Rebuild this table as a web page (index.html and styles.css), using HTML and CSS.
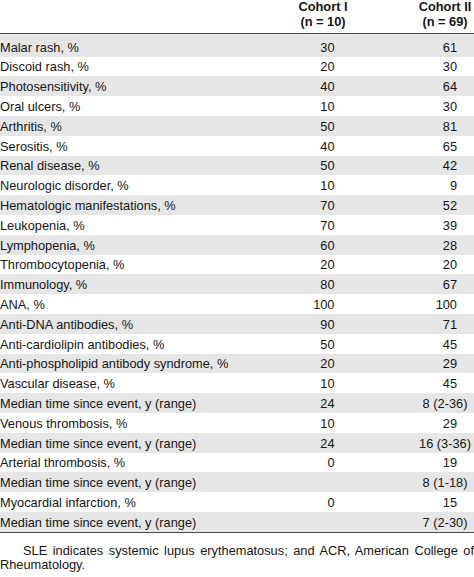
FILE: index.html
```html
<!DOCTYPE html>
<html lang="en">
<head>
<meta charset="utf-8">
<title>Cohort table</title>
<link rel="stylesheet" href="styles.css">
</head>
<body>
<div class="table">
  <div class="head">
    <div class="label"></div>
    <div class="c1 hcell">Cohort I<br>(n = 10)</div>
    <div class="c2 hcell">Cohort II<br>(n = 69)</div>
  </div>
  <div class="row shade first"><div class="label">Malar rash, %</div><div class="c1 num">30</div><div class="c2 num">61</div></div>
  <div class="row"><div class="label">Discoid rash, %</div><div class="c1 num">20</div><div class="c2 num">30</div></div>
  <div class="row shade"><div class="label">Photosensitivity, %</div><div class="c1 num">40</div><div class="c2 num">64</div></div>
  <div class="row"><div class="label">Oral ulcers, %</div><div class="c1 num">10</div><div class="c2 num">30</div></div>
  <div class="row shade"><div class="label">Arthritis, %</div><div class="c1 num">50</div><div class="c2 num">81</div></div>
  <div class="row"><div class="label">Serositis, %</div><div class="c1 num">40</div><div class="c2 num">65</div></div>
  <div class="row shade"><div class="label">Renal disease, %</div><div class="c1 num">50</div><div class="c2 num">42</div></div>
  <div class="row"><div class="label">Neurologic disorder, %</div><div class="c1 num">10</div><div class="c2 num">9</div></div>
  <div class="row shade"><div class="label">Hematologic manifestations, %</div><div class="c1 num">70</div><div class="c2 num">52</div></div>
  <div class="row"><div class="label">Leukopenia, %</div><div class="c1 num">70</div><div class="c2 num">39</div></div>
  <div class="row shade"><div class="label">Lymphopenia, %</div><div class="c1 num">60</div><div class="c2 num">28</div></div>
  <div class="row"><div class="label">Thrombocytopenia, %</div><div class="c1 num">20</div><div class="c2 num">20</div></div>
  <div class="row shade"><div class="label">Immunology, %</div><div class="c1 num">80</div><div class="c2 num">67</div></div>
  <div class="row"><div class="label">ANA, %</div><div class="c1 num">100</div><div class="c2 num">100</div></div>
  <div class="row shade"><div class="label">Anti-DNA antibodies, %</div><div class="c1 num">90</div><div class="c2 num">71</div></div>
  <div class="row"><div class="label">Anti-cardiolipin antibodies, %</div><div class="c1 num">50</div><div class="c2 num">45</div></div>
  <div class="row shade"><div class="label">Anti-phospholipid antibody syndrome, %</div><div class="c1 num">20</div><div class="c2 num">29</div></div>
  <div class="row"><div class="label">Vascular disease, %</div><div class="c1 num">10</div><div class="c2 num">45</div></div>
  <div class="row shade"><div class="label">Median time since event, y (range)</div><div class="c1 num">24</div><div class="c2 rng">8 (2-36)</div></div>
  <div class="row"><div class="label">Venous thrombosis, %</div><div class="c1 num">10</div><div class="c2 num">29</div></div>
  <div class="row shade"><div class="label">Median time since event, y (range)</div><div class="c1 num">24</div><div class="c2 rng">16 (3-36)</div></div>
  <div class="row"><div class="label">Arterial thrombosis, %</div><div class="c1 num">0</div><div class="c2 num">19</div></div>
  <div class="row shade"><div class="label">Median time since event, y (range)</div><div class="c1 num"></div><div class="c2 rng">8 (1-18)</div></div>
  <div class="row"><div class="label">Myocardial infarction, %</div><div class="c1 num">0</div><div class="c2 num">15</div></div>
  <div class="row shade last"><div class="label">Median time since event, y (range)</div><div class="c1 num"></div><div class="c2 rng">7 (2-30)</div></div>
</div>
<p class="note">SLE indicates systemic lupus erythematosus; and ACR, American College of Rheumatology.</p>
</body>
</html>
```

FILE: styles.css
```css
html, body {
  margin: 0;
  padding: 0;
  background: #ffffff;
  overflow: hidden;
}
body {
  font-family: "Liberation Sans", Arial, sans-serif;
  font-size: 12.8px;
  color: #151515;
  width: 474px;
}
.table {
  width: 474px;
  display: flex;
  flex-direction: column;
}
.head {
  display: flex;
  height: 33px;
  border-bottom: 1.5px solid #4a4a4a;
  font-weight: bold;
  line-height: 15px;
}
.hcell {
  text-align: center;
  margin-top: -1px;
  white-space: nowrap;
}
.row {
  display: flex;
  height: 19.8px;
  box-sizing: border-box;
  padding-top: 1.8px;
  line-height: 18px;
  white-space: nowrap;
}
.row.first {
  height: 22.6px;
  padding-top: 4.6px;
}
.row.last {
  border-bottom: 1.5px solid #4a4a4a;
  height: 21.3px;
}
.shade {
  background: #e6e6e6;
}
.label {
  width: 290px;
  flex: none;
}
.c1 {
  width: 66px;
  flex: none;
}
.c2 {
  width: 58px;
  flex: none;
  margin-left: 60px;
}
.c1.num {
  text-align: right;
  padding-right: 21.5px;
  box-sizing: border-box;
}
.c2.num {
  text-align: right;
  padding-right: 17px;
  box-sizing: border-box;
}
.c2.rng {
  text-align: center;
}
.note {
  margin: 10.5px 0 0 0;
  width: 474px;
  line-height: 14px;
  text-align: justify;
  text-indent: 23px;
}
```
